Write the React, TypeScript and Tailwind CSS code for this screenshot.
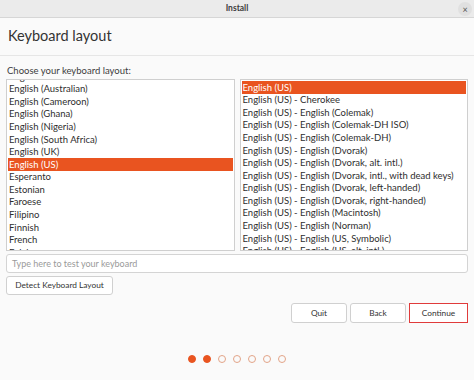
import React from "react";

const leftLayouts = [
  "English (Australian)",
  "English (Cameroon)",
  "English (Ghana)",
  "English (Nigeria)",
  "English (South Africa)",
  "English (UK)",
  "English (US)",
  "Esperanto",
  "Estonian",
  "Faroese",
  "Filipino",
  "Finnish",
  "French",
  "Fulah",
];

const variants = [
  "English (US)",
  "English (US) - Cherokee",
  "English (US) - English (Colemak)",
  "English (US) - English (Colemak-DH ISO)",
  "English (US) - English (Colemak-DH)",
  "English (US) - English (Dvorak)",
  "English (US) - English (Dvorak, alt. intl.)",
  "English (US) - English (Dvorak, intl., with dead keys)",
  "English (US) - English (Dvorak, left-handed)",
  "English (US) - English (Dvorak, right-handed)",
  "English (US) - English (Macintosh)",
  "English (US) - English (Norman)",
  "English (US) - English (US, Symbolic)",
  "English (US) - English (US, alt. intl.)",
];

const Row: React.FC<{ label: string; active: boolean }> = ({ label, active }) => (
  <div
    className={`h-[12.6px] flex items-center px-[1px] whitespace-nowrap ${
      active ? "bg-[#e95420] text-white" : "text-[#2e2e2e]"
    }`}
  >
    {label}
  </div>
);

export default function App() {
  return (
    <div
      className="w-[474px] h-[380px] bg-[#fafafa] flex flex-col overflow-hidden text-[9.5px] leading-none"
      style={{ fontFamily: 'Lato, "Noto Sans", sans-serif' }}
    >
      {/* title bar */}
      <div className="h-[18px] shrink-0 bg-[#ebebeb] border-b border-[#d6d6d6] flex items-center justify-center relative">
        <span className="font-bold text-[8.5px] text-[#3d3d3d]">Install</span>
        <span className="absolute right-[2px] top-[2px] w-[14px] h-[14px] rounded-full bg-[#e0e0e0] flex items-center justify-center text-[#555] text-[9px] leading-none">
          ×
        </span>
      </div>

      {/* header */}
      <div className="h-[38px] shrink-0 border-b border-[#e6e6e6] flex items-center px-[8px]">
        <h1 className="text-[14.5px] text-[#333] leading-none">Keyboard layout</h1>
      </div>

      <div className="flex-1 flex flex-col px-[6px]">
        <div className="h-[23px] flex items-end pb-[4px] px-[1px] text-[#3d3d3d]">Choose your keyboard layout:</div>

        <div className="flex gap-[5px] h-[172px]">
          <div className="flex-1 border border-[#cfcfcf] bg-white overflow-hidden p-px">
            <div className="-mt-[11px]">
              <Row label="English" active={false} />
              {leftLayouts.map((l) => (
                <Row key={l} label={l} active={l === "English (US)"} />
              ))}
            </div>
          </div>
          <div className="flex-1 border border-[#cfcfcf] bg-white overflow-hidden p-px">
            {variants.map((v, i) => (
              <Row key={v} label={v} active={i === 0} />
            ))}
          </div>
        </div>

        <div className="mt-[3px] h-[19px] shrink-0 border border-[#d4d4d4] rounded-[3px] bg-white flex items-center px-[5px] text-[9px] text-[#9a9a9a]">
          Type here to test your keyboard
        </div>

        <div className="mt-[3px]">
          <button className="h-[19px] w-[107px] border border-[#d0d0d0] rounded-[3px] bg-white text-[8.3px] text-[#333] flex items-center justify-center">
            Detect Keyboard Layout
          </button>
        </div>

        <div className="mt-[8px] flex justify-end gap-[3px] text-[8.3px]">
          <button className="h-[20px] w-[56px] border border-[#d0d0d0] rounded-[3px] bg-white text-[#333]">Quit</button>
          <button className="h-[20px] w-[56px] border border-[#d0d0d0] rounded-[3px] bg-white text-[#333]">Back</button>
          <button className="h-[20px] w-[59px] border border-[#e03b3b] bg-white text-[#333]">Continue</button>
        </div>

        <div className="mt-[32px] flex justify-center gap-[7px]">
          {[0, 1, 2, 3, 4, 5, 6].map((i) => (
            <span
              key={i}
              className={`w-[8px] h-[8px] rounded-full border ${
                i < 2 ? "bg-[#e95420] border-[#e95420]" : "border-[#e3a488] bg-transparent"
              }`}
            />
          ))}
        </div>
      </div>
    </div>
  );
}
